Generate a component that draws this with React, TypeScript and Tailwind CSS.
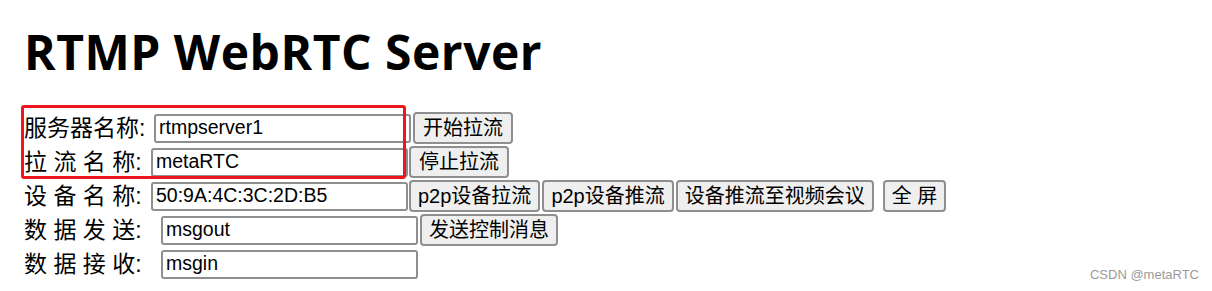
const latin = "font-['Liberation_Sans','Noto_Sans_CJK_SC',sans-serif]";

function Field({ label, labelWidth, value }: { label: string; labelWidth: string; value: string }) {
  return (
    <>
      <span className={`${labelWidth} shrink-0 whitespace-pre text-[23px] text-black ${latin}`}>{label}</span>
      <input
        readOnly
        value={value}
        className={`h-[29px] w-[257px] shrink-0 rounded-[3px] border-2 border-[#8f8f8f] bg-white px-[3px] text-[19.5px] text-black outline-none ${latin}`}
      />
    </>
  );
}

function Btn({ children, className = "" }: { children: React.ReactNode; className?: string }) {
  return (
    <button
      type="button"
      className={`h-[32px] shrink-0 whitespace-pre rounded-[4px] border-2 border-[#8f8f8f] bg-[#efefef] px-[7px] text-[20px] leading-none text-black ${latin} ${className}`}
    >
      {children}
    </button>
  );
}

export default function App() {
  return (
    <div className="relative h-[291px] w-[1212px] overflow-hidden bg-white">
      <h1 className="pl-[24px] pt-[28px] font-['Open_Sans',sans-serif] text-[48px] font-bold leading-none tracking-[0.5px] text-black">
        RTMP WebRTC Server
      </h1>

      <div className="mt-[35px] flex flex-col pl-[24px]">
        <div className="flex h-[34px] items-center">
          <Field label="服务器名称:" labelWidth="w-[130px]" value="rtmpserver1" />
          <Btn className="ml-[2px] px-[8px]">开始拉流</Btn>
        </div>
        <div className="flex h-[34px] items-center">
          <Field label="拉 流 名 称:" labelWidth="w-[127px]" value="metaRTC" />
          <Btn className="ml-[1px] px-[8px]">停止拉流</Btn>
        </div>
        <div className="flex h-[34px] items-center">
          <Field label="设 备 名 称:" labelWidth="w-[127px]" value="50:9A:4C:3C:2D:B5" />
          <Btn className="ml-[1px]">p2p设备拉流</Btn>
          <Btn className="ml-[2px]">p2p设备推流</Btn>
          <Btn className="ml-[2px]">设备推流至视频会议</Btn>
          <Btn className="ml-[9px]">全 屏</Btn>
        </div>
        <div className="flex h-[34px] items-center">
          <Field label="数 据 发 送:" labelWidth="w-[137px]" value="msgout" />
          <Btn className="ml-[2px]">发送控制消息</Btn>
        </div>
        <div className="flex h-[34px] items-center">
          <Field label="数 据 接 收:" labelWidth="w-[137px]" value="msgin" />
        </div>
      </div>

      {/* annotation frame drawn over the first two rows */}
      <div className="absolute left-[21px] top-[105px] h-[74px] w-[385px] rounded-[3px] border-[3px] border-[#f0141c]" />

      <span className="absolute bottom-[7px] right-[13px] font-['Liberation_Sans',sans-serif] text-[13px] text-[#9a9a9a]">
        CSDN @metaRTC
      </span>
    </div>
  );
}
